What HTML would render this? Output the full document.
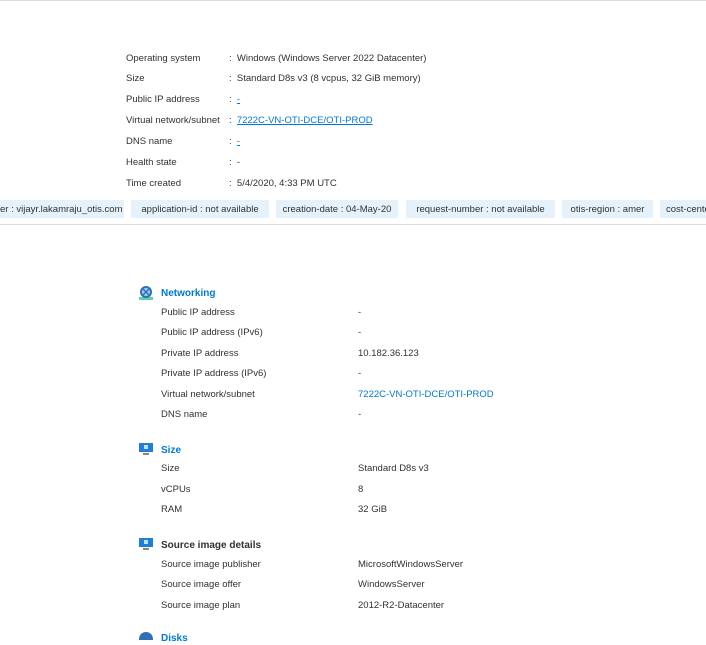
<!DOCTYPE html>
<html><head><style>
body{margin:0;width:706px;height:637px;overflow:hidden;background:#fff;font-family:"Liberation Sans",sans-serif;font-size:9.5px;color:#323130;position:relative}
.t{position:absolute;white-space:nowrap;line-height:12px;margin-top:1.5px}
a{color:#0078d4;text-decoration:underline}
.h{font-weight:bold;font-size:10px}
.b{color:#0078d4}
.tag{position:absolute;top:200px;height:18px;line-height:19px;background:#e6f2fb;color:#323130;white-space:nowrap;overflow:hidden;text-align:center;font-size:9.5px}
</style></head><body>
<div style="position:absolute;top:0;left:0;width:706px;height:1px;background:#ddd"></div>
<div class="t" style="left:126px;top:51px">Operating system</div><div class="t" style="left:229px;top:51px">:&nbsp; Windows (Windows Server 2022 Datacenter)</div>
<div class="t" style="left:126px;top:71px">Size</div><div class="t" style="left:229px;top:71px">:&nbsp; Standard D8s v3 (8 vcpus, 32 GiB memory)</div>
<div class="t" style="left:126px;top:92px">Public IP address</div><div class="t" style="left:229px;top:92px">:&nbsp; <a>-</a></div>
<div class="t" style="left:126px;top:113px">Virtual network/subnet</div><div class="t" style="left:229px;top:113px">:&nbsp; <a>7222C-VN-OTI-DCE/OTI-PROD</a></div>
<div class="t" style="left:126px;top:134px">DNS name</div><div class="t" style="left:229px;top:134px">:&nbsp; <a>-</a></div>
<div class="t" style="left:126px;top:155px">Health state</div><div class="t" style="left:229px;top:155px">:&nbsp; -</div>
<div class="t" style="left:126px;top:176px">Time created</div><div class="t" style="left:229px;top:176px">:&nbsp; 5/4/2020, 4:33 PM UTC</div>
<div class="tag" style="left:0;width:124px;text-align:right">er : vijayr.lakamraju_otis.com&nbsp;&nbsp;</div>
<div class="tag" style="left:131px;width:138px">application-id : not available</div>
<div class="tag" style="left:276px;width:122px">creation-date : 04-May-20</div>
<div class="tag" style="left:406px;width:149px">request-number : not available</div>
<div class="tag" style="left:562px;width:91px">otis-region : amer</div>
<div class="tag" style="left:660px;width:60px;text-align:left;padding-left:6px">cost-center</div>
<div style="position:absolute;top:224px;left:0;width:706px;height:1px;background:#ddd"></div>

<svg style="position:absolute;left:138px;top:285px" width="16" height="16" viewBox="0 0 16 16"><rect x="1" y="12" width="14" height="3" fill="#5fd3a8"/><circle cx="8" cy="7" r="6" fill="#2f6fb7"/><circle cx="8" cy="7" r="4" fill="#9fd0f5"/><path d="M5 4l6 6M11 4l-6 6" stroke="#2f6fb7" stroke-width="1.5"/></svg>
<div class="t h b" style="left:161px;top:286px">Networking</div>
<div class="t" style="left:161px;top:305px">Public IP address</div><div class="t" style="left:358px;top:305px">-</div>
<div class="t" style="left:161px;top:325px">Public IP address (IPv6)</div><div class="t" style="left:358px;top:325px">-</div>
<div class="t" style="left:161px;top:346px">Private IP address</div><div class="t" style="left:358px;top:346px">10.182.36.123</div>
<div class="t" style="left:161px;top:366px">Private IP address (IPv6)</div><div class="t" style="left:358px;top:366px">-</div>
<div class="t" style="left:161px;top:387px">Virtual network/subnet</div><div class="t" style="left:358px;top:387px;color:#0078d4">7222C-VN-OTI-DCE/OTI-PROD</div>
<div class="t" style="left:161px;top:407px">DNS name</div><div class="t" style="left:358px;top:407px">-</div>

<svg style="position:absolute;left:138px;top:442px" width="16" height="14" viewBox="0 0 16 14"><rect x="1" y="1" width="14" height="9" fill="#1f7fd8"/><rect x="6" y="3" width="4" height="4" fill="#bfe3ff"/><rect x="5" y="11" width="6" height="2" fill="#888"/></svg>
<div class="t h b" style="left:161px;top:443px">Size</div>
<div class="t" style="left:161px;top:461px">Size</div><div class="t" style="left:358px;top:461px">Standard D8s v3</div>
<div class="t" style="left:161px;top:482px">vCPUs</div><div class="t" style="left:358px;top:482px">8</div>
<div class="t" style="left:161px;top:502px">RAM</div><div class="t" style="left:358px;top:502px">32 GiB</div>

<svg style="position:absolute;left:138px;top:537px" width="16" height="14" viewBox="0 0 16 14"><rect x="1" y="1" width="14" height="9" fill="#1f7fd8"/><rect x="6" y="3" width="4" height="4" fill="#bfe3ff"/><rect x="5" y="11" width="6" height="2" fill="#888"/></svg>
<div class="t h" style="left:161px;top:538px">Source image details</div>
<div class="t" style="left:161px;top:557px">Source image publisher</div><div class="t" style="left:358px;top:557px">MicrosoftWindowsServer</div>
<div class="t" style="left:161px;top:577px">Source image offer</div><div class="t" style="left:358px;top:577px">WindowsServer</div>
<div class="t" style="left:161px;top:598px">Source image plan</div><div class="t" style="left:358px;top:598px">2012-R2-Datacenter</div>

<div style="position:absolute;left:139px;top:632px;width:14px;height:8px;border-radius:7px 7px 0 0;background:#2f6fb7"></div>
<div class="t h b" style="left:161px;top:631px">Disks</div>
</body></html>
